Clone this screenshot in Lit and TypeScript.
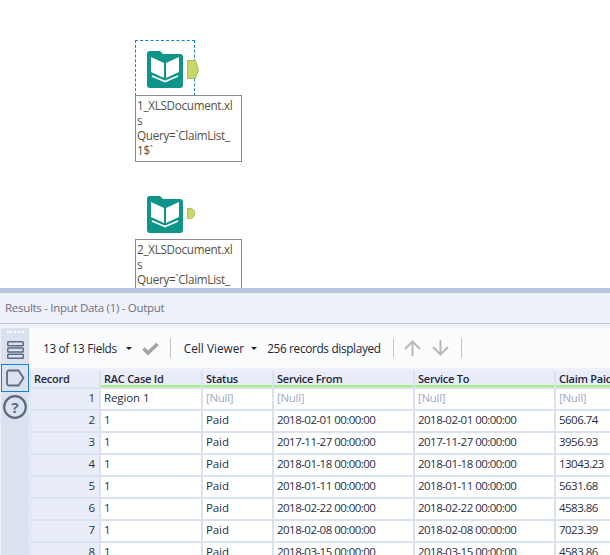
import { LitElement, html, css } from "lit";
import { customElement } from "lit/decorators.js";

const rows = [
  ["2", "1", "Paid", "2018-02-01 00:00:00", "2018-02-01 00:00:00", "5606.74"],
  ["3", "1", "Paid", "2017-11-27 00:00:00", "2017-11-27 00:00:00", "3956.93"],
  ["4", "1", "Paid", "2018-01-18 00:00:00", "2018-01-18 00:00:00", "13043.23"],
  ["5", "1", "Paid", "2018-01-11 00:00:00", "2018-01-11 00:00:00", "5631.68"],
  ["6", "1", "Paid", "2018-02-22 00:00:00", "2018-02-22 00:00:00", "4583.86"],
  ["7", "1", "Paid", "2018-02-08 00:00:00", "2018-02-08 00:00:00", "7023.39"],
  ["8", "1", "Paid", "2018-03-15 00:00:00", "2018-03-15 00:00:00", "4583.86"],
];

const bookIcon = html`<svg class="book" width="36" height="37" viewBox="0 0 36 37">
  <path d="M0 3a3 3 0 0 1 3-3h10l3 3h17a3 3 0 0 1 3 3v28a3 3 0 0 1-3 3H3a3 3 0 0 1-3-3z" fill="#0e9488"/>
  <path d="M4 6l13 6v15L4 21zM32 6l-13 6v15l13-6z" fill="#fff"/>
  <path d="M5 25l13 5.500 13-5.500" fill="none" stroke="#fff" stroke-width="1.700"/>
</svg>`;

@customElement("app-root")
export class AppRoot extends LitElement {
  static styles = css`
    :host { display: block; width: 610px; height: 555px; overflow: hidden; background: #fff; font-family: "Open Sans", "Noto Sans", sans-serif; font-size: 11.500px; color: #2a2f45; }
    .canvas { height: 288px; position: relative; overflow: hidden; background: #fff; }
    .tool { position: absolute; left: 135px; }
    .t1 { top: 40px; }
    .t2 { top: 187px; }
    .sel { position: absolute; left: 0; top: 0; width: 60px; height: 56px; border: 1px dashed #1a7fd6; box-sizing: border-box; }
    .book { position: absolute; left: 12px; top: 11px; }
    .anchor { position: absolute; left: 52px; top: 20px; }
    .t2 .book { top: 9px; }
    .t2 .anchor { top: 21px; }
    .label { position: absolute; left: 0; width: 107px; height: 67px; box-sizing: border-box; border: 1px solid #8a8a8a; background: #fff; padding: 2px 0 0 1px; line-height: 15px; color: #55513f; font-size: 11.700px; letter-spacing: -0.3px; white-space: nowrap; }
    .t1 .label { top: 55px; }
    .t2 .label { top: 52px; height: 49px; border-bottom: none; }
    .split { height: 5px; background: #b9c5dc; }
    .title { height: 30px; background: #eef1f9; border-bottom: 1px solid #c6c6c6; padding-left: 5px; line-height: 29px; color: #6e7282; font-size: 11.500px; letter-spacing: -0.3px; }
    .body { display: flex; height: 227px; background: #eef1f9; padding-top: 4px; }
    .rail { width: 28px; background: #dbe2ef; flex: none; border-radius: 3px 0 0 0; display: flex; flex-direction: column; align-items: center; margin: 0 1px 0 1px; }
    .dots { height: 2px; margin-top: 3px; width: 17px; border-top: 2px dotted #fff; box-sizing: border-box; flex: none; }
    .railbtn { width: 28px; display: flex; align-items: center; justify-content: center; box-sizing: border-box; flex: none; }
    .stack { height: 31px; padding-top: 3px; }
    .active { height: 28px; border: 1px solid #1a7fd6; }
    .help { height: 30px; }
    .main { flex: 1; min-width: 0; display: flex; flex-direction: column; }
    .toolbar { height: 40px; margin-bottom: 3px; background: #fbfcfe; display: flex; align-items: center; color: #22263a; font-size: 11.800px; flex: none; }
    .caret { width: 0; height: 0; border-left: 3px solid transparent; border-right: 3px solid transparent; border-top: 3px solid #222; flex: none; }
    .sep { width: 1px; height: 20px; background: #c4c4c4; flex: none; }
    .tight { letter-spacing: -0.33px; white-space: nowrap; }
    .fields { margin-left: 13px; }
    .c1 { margin-left: 9px; }
    .check { margin-left: 10px; margin-right: 11px; flex: none; }
    .viewer { margin-left: 13px; white-space: nowrap; }
    .c2 { margin-left: 7px; }
    .records { margin-left: 10px; }
    .s2 { margin-left: 12px; }
    .up { margin-left: 10px; flex: none; }
    .down { margin-left: 11px; flex: none; }
    .s3 { margin-left: 12px; }
    .grid { display: grid; grid-template-columns: 68px 100px 69px 139px 139px 60px; grid-template-rows: 16px; grid-auto-rows: 20px; background: #dbe2ef; gap: 2px; overflow: hidden; flex: 1; padding-left: 1px; }
    .cell { background: #fff; padding-left: 3px; line-height: 18px; white-space: nowrap; overflow: hidden; font-size: 11.500px; letter-spacing: -0.1px; }
    .head { background: #e9edf8; font-weight: 600; color: #22263a; padding-left: 3px; line-height: 16px; white-space: nowrap; overflow: hidden; box-sizing: border-box; font-size: 11px; letter-spacing: -0.25px; }
    .bar { border-bottom: 2px solid #9ff07d; }
    .num { background: #e9edf8; text-align: right; padding-right: 4px; padding-left: 0; }
    .null { color: #a5a9c9; letter-spacing: -0.3px; }
    .digits { letter-spacing: -0.53px; }
  `;

  render() {
    const heads = ["RAC Case Id", "Status", "Service From", "Service To", "Claim Paid"];
    return html`
      <div class="canvas">
        <div class="tool t1">
          <div class="sel"></div>
          ${bookIcon}
          <svg class="anchor" width="12" height="19" viewBox="0 0 12 19"><path d="M.5.5h8l3 9-3 9h-8z" fill="#c5d96b" stroke="#a9c24f"/></svg>
          <div class="label"><div>1_XLSDocument.xl</div><div>s</div><div>Query=\`ClaimList_</div><div>1$\`</div></div>
        </div>
        <div class="tool t2">
          ${bookIcon}
          <svg class="anchor" width="8" height="11" viewBox="0 0 8 11"><path d="M.5.500h2.500a5 5 0 0 1 0 10H.5z" fill="#c5d96b" stroke="#a9c24f"/></svg>
          <div class="label"><div>2_XLSDocument.xl</div><div>s</div><div>Query=\`ClaimList_</div></div>
        </div>
      </div>
      <div class="split"></div>
      <div class="title">Results - Input Data (1) - Output</div>
      <div class="body">
        <div class="rail">
          <div class="dots"></div>
          <div class="railbtn stack">
            <svg width="17" height="18" viewBox="0 0 17 18" fill="none" stroke="#5d6a80" stroke-width="1.500"><rect x=".75" y=".75" width="15.500" height="4" rx=".8"/><rect x=".75" y="7" width="15.500" height="4" rx=".8"/><rect x=".75" y="13.250" width="15.500" height="4" rx=".8"/></svg>
          </div>
          <div class="railbtn active">
            <svg width="19" height="18" viewBox="0 0 19 18" fill="none" stroke="#5d6a80" stroke-width="1.800"><path d="M3 1.500h9.500l5 7.500-5 7.500H3a2 2 0 0 1-2-2v-11a2 2 0 0 1 2-2z"/></svg>
          </div>
          <div class="railbtn help">
            <svg width="24" height="24" viewBox="0 0 24 24"><circle cx="12" cy="12" r="10.800" fill="none" stroke="#5d6a80" stroke-width="2.200"/><text x="12" y="17.500" font-size="15" font-weight="700" text-anchor="middle" fill="#5d6a80" font-family="Open Sans">?</text></svg>
          </div>
        </div>
        <div class="main">
          <div class="toolbar">
            <span class="tight fields">13 of 13 Fields</span><span class="caret c1"></span>
            <svg class="check" width="17" height="13" viewBox="0 0 17 13"><path d="M1.500 6.500l4.500 4.500L15.500 2" fill="none" stroke="#a3a3a3" stroke-width="3.600"/></svg>
            <span class="sep"></span>
            <span class="viewer">Cell Viewer</span><span class="caret c2"></span>
            <span class="tight records">256 records displayed</span>
            <span class="sep s2"></span>
            <svg class="up" width="17" height="16" viewBox="0 0 17 16" fill="none" stroke="#b9b9b9" stroke-width="2"><path d="M8.500 16V2M1 9l7.500-7.500L16 9"/></svg>
            <svg class="down" width="17" height="16" viewBox="0 0 17 16" fill="none" stroke="#b9b9b9" stroke-width="2"><path d="M8.500 0v14M1 7l7.500 7.500L16 7"/></svg>
            <span class="sep s3"></span>
          </div>
          <div class="grid">
            <div class="head">Record</div>
            ${heads.map((h) => html`<div class="head bar">${h}</div>`)}
            <div class="cell num">1</div>
            <div class="cell">Region 1</div>
            ${[0, 1, 2, 3].map(() => html`<div class="cell null">[Null]</div>`)}
            ${rows.map((r) => r.map((v, i) => html`<div class="cell ${i === 0 ? "num" : i >= 3 ? "digits" : ""}">${v}</div>`))}
          </div>
        </div>
      </div>
    `;
  }
}
